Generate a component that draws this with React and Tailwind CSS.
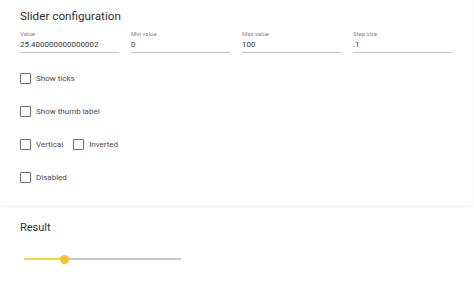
import React from 'react';

const fields = [
  { label: 'Value', value: '25.400000000000002' },
  { label: 'Min value', value: '0' },
  { label: 'Max value', value: '100' },
  { label: 'Step size', value: '.1' },
];

function Checkbox({ label }) {
  return (
    <label className="flex items-center gap-[5px]">
      <span className="block w-[11px] h-[11px] border-[1.5px] border-[#6e6e6e] rounded-[1px]" />
      <span className="text-[8px] leading-[11px] text-[#4a4a4a]">{label}</span>
    </label>
  );
}

export default function App() {
  return (
    <div
      className="w-[474px] h-[284px] bg-white overflow-hidden"
      style={{ fontFamily: 'Roboto, "Liberation Sans", sans-serif' }}
    >
      {/* config card */}
      <div className="h-[206px] w-[472px] px-[20px] pt-[6px] shadow-[0_1px_2px_rgba(0,0,0,0.06)]">
        <h2 className="text-[11.7px] leading-[20px] text-[#303030]">Slider configuration</h2>
        <div className="flex gap-[12px] mt-[4px]">
          {fields.map((f) => (
            <div key={f.label} className="w-[99px] border-b border-[#c2c2c2]">
              <div className="text-[6px] leading-[8px] text-[#8a8a8a]">{f.label}</div>
              <div className="text-[8px] leading-[13px] text-[#333] pb-[1px]">{f.value}</div>
            </div>
          ))}
        </div>
        <div className="flex flex-col gap-[22px] mt-[20px]">
          <Checkbox label="Show ticks" />
          <Checkbox label="Show thumb label" />
          <div className="flex gap-[10px]">
            <Checkbox label="Vertical" />
            <Checkbox label="Inverted" />
          </div>
          <Checkbox label="Disabled" />
        </div>
      </div>

      {/* result card */}
      <div className="px-[20px] pt-[13px]">
        <h2 className="text-[11px] leading-[18px] text-[#303030]">Result</h2>
        <div className="relative w-[157px] h-[14px] ml-[4px] mt-[15px]">
          <div className="absolute left-0 right-0 top-[6px] h-[2px] bg-[#c8c8c8]" />
          <div className="absolute left-0 top-[6px] h-[2px] w-[40px] bg-[#fbd33e]" />
          <div className="absolute left-[35.5px] top-[2.5px] w-[9px] h-[9px] rounded-full bg-[#fbc02d]" />
        </div>
      </div>
    </div>
  );
}
